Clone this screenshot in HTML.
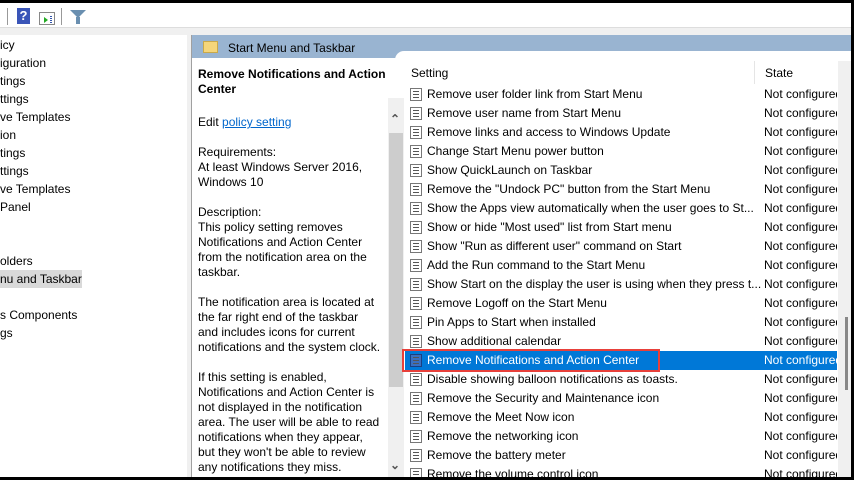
<!DOCTYPE html>
<html><head><style>
*{margin:0;padding:0;box-sizing:border-box}
html,body{width:854px;height:480px;overflow:hidden}
body{background:#000;position:relative;font-family:"Liberation Sans",sans-serif;font-size:12px;color:#000}
.a{position:absolute}
.tree div{position:absolute;left:0;height:18px;line-height:18px;font-size:12px}
.row{position:absolute;left:405px;width:432px;height:19px;line-height:19px;font-size:12px;white-space:nowrap;overflow:hidden}
.row .ic{position:absolute;left:5px;top:3px;width:12px;height:13px;border:1px solid #777;background:#fff}
.row .ic:before{content:"";position:absolute;left:2px;top:2px;width:6px;height:7px;background:repeating-linear-gradient(#555 0 1px,transparent 1px 3px)}
.row .t{position:absolute;left:22px}
.row .s{position:absolute;left:359px}
.desc{position:absolute;left:198px;top:66px;width:188px;height:408px;overflow:hidden;font-size:12px;line-height:15px;white-space:nowrap}
.desc>div{margin-top:15px}
</style></head><body>
<div class="a" style="left:0;top:3px;width:851px;height:24px;background:#fff"></div>
<div class="a" style="left:0;top:27px;width:851px;height:8px;background:#f0f0f0;border-top:1px solid #ddd"></div>
<div class="a" style="left:7px;top:8px;width:1px;height:17px;background:#999"></div>
<div class="a" style="left:17px;top:8px;width:13px;height:16px;background:#3a55b8;color:#fff;font-weight:bold;font-size:13px;text-align:center;line-height:16px">?</div>
<div class="a" style="left:39px;top:12px;width:16px;height:13px;border:1px solid #888;background:#fff"><div class="a" style="left:4px;top:4px;width:0;height:0;border-left:4px solid #2a2;border-top:3px solid transparent;border-bottom:3px solid transparent"></div><div class="a" style="left:10px;top:3px;width:2px;height:7px;background:repeating-linear-gradient(#35a 0 1px,transparent 1px 2px)"></div></div>
<div class="a" style="left:61px;top:8px;width:1px;height:17px;background:#999"></div>
<div class="a" style="left:70px;top:10px;width:0;height:0;border-left:8px solid transparent;border-right:8px solid transparent;border-top:8px solid #6a8fb0"></div>
<div class="a" style="left:76px;top:17px;width:4px;height:7px;background:#6a8fb0"></div>
<!-- left -->
<div class="a tree" style="left:0;top:35px;width:187px;height:442px;background:#fff">
<div style="top:1px">icy</div><div style="top:19px">iguration</div><div style="top:37px">tings</div><div style="top:55px">ttings</div><div style="top:73px">ve Templates</div><div style="top:91px">ion</div><div style="top:109px">tings</div><div style="top:127px">ttings</div><div style="top:145px">ve Templates</div><div style="top:163px">Panel</div><div style="top:217px">olders</div><div style="top:235px;background:#d9d9d9;width:82px">nu and Taskbar</div><div style="top:271px">s Components</div><div style="top:289px">gs</div>
</div>
<div class="a" style="left:187px;top:35px;width:4px;height:442px;background:#f0f0f0"></div>
<div class="a" style="left:191px;top:35px;width:1px;height:442px;background:#a0a0a0"></div>
<!-- header -->
<div class="a" style="left:192px;top:35px;width:659px;height:24px;background:#99b4d1"></div>
<div class="a" style="left:203px;top:41px;width:15px;height:12px;background:#f5d67a;border:1px solid #c9a94a"></div>
<div class="a" style="left:228px;top:41px;font-size:12px">Start Menu and Taskbar</div>
<div class="a" style="left:192px;top:58px;width:204px;height:419px;background:#fff"></div>
<div class="a" style="left:395px;top:51px;width:456px;height:426px;background:#fff;border-top-left-radius:9px"></div>
<div class="desc"><b style="display:block;margin-top:1px">Remove Notifications and Action<br>Center</b>
<div style="margin-top:18px">Edit <span style="color:#06c;text-decoration:underline">policy setting </span></div>
<div>Requirements:<br>At least Windows Server 2016,<br>Windows 10</div>
<div>Description:<br>This policy setting removes<br>Notifications and Action Center<br>from the notification area on the<br>taskbar.</div>
<div>The notification area is located at<br>the far right end of the taskbar<br>and includes icons for current<br>notifications and the system clock.</div>
<div>If this setting is enabled,<br>Notifications and Action Center is<br>not displayed in the notification<br>area. The user will be able to read<br>notifications when they appear,<br>but they won't be able to review<br>any notifications they miss.</div></div>
<div class="a" style="left:388px;top:98px;width:16px;height:379px;background:#f0f0f0"></div>
<div class="a" style="left:389px;top:133px;width:14px;height:254px;background:#cdcdcd"></div>
<div class="a" style="left:390px;top:112px;font-size:12px;font-weight:bold;color:#555">&#8963;</div>
<div class="a" style="left:390px;top:458px;font-size:12px;font-weight:bold;color:#555">&#8964;</div>
<!-- list -->
<div class="a" style="left:411px;top:66px">Setting</div>
<div class="a" style="left:754px;top:61px;width:1px;height:23px;background:#e5e5e5"></div>
<div class="a" style="left:765px;top:66px">State</div>
<div class="a" style="left:838px;top:61px;width:13px;height:416px;background:#f0f0f0"></div>
<div class="a" style="left:845px;top:317px;width:3px;height:73px;background:#888"></div>
<div class="row" style="top:85px"><i class="ic"></i><span class="t">Remove user folder link from Start Menu</span><span class="s">Not configured</span></div>
<div class="row" style="top:104px"><i class="ic"></i><span class="t">Remove user name from Start Menu</span><span class="s">Not configured</span></div>
<div class="row" style="top:123px"><i class="ic"></i><span class="t">Remove links and access to Windows Update</span><span class="s">Not configured</span></div>
<div class="row" style="top:142px"><i class="ic"></i><span class="t">Change Start Menu power button</span><span class="s">Not configured</span></div>
<div class="row" style="top:161px"><i class="ic"></i><span class="t">Show QuickLaunch on Taskbar</span><span class="s">Not configured</span></div>
<div class="row" style="top:180px"><i class="ic"></i><span class="t">Remove the "Undock PC" button from the Start Menu</span><span class="s">Not configured</span></div>
<div class="row" style="top:199px"><i class="ic"></i><span class="t">Show the Apps view automatically when the user goes to St...</span><span class="s">Not configured</span></div>
<div class="row" style="top:218px"><i class="ic"></i><span class="t">Show or hide "Most used" list from Start menu</span><span class="s">Not configured</span></div>
<div class="row" style="top:237px"><i class="ic"></i><span class="t">Show "Run as different user" command on Start</span><span class="s">Not configured</span></div>
<div class="row" style="top:256px"><i class="ic"></i><span class="t">Add the Run command to the Start Menu</span><span class="s">Not configured</span></div>
<div class="row" style="top:275px"><i class="ic"></i><span class="t">Show Start on the display the user is using when they press t...</span><span class="s">Not configured</span></div>
<div class="row" style="top:294px"><i class="ic"></i><span class="t">Remove Logoff on the Start Menu</span><span class="s">Not configured</span></div>
<div class="row" style="top:313px"><i class="ic"></i><span class="t">Pin Apps to Start when installed</span><span class="s">Not configured</span></div>
<div class="row" style="top:332px"><i class="ic"></i><span class="t">Show additional calendar</span><span class="s">Not configured</span></div>
<div class="row" style="top:351px;height:19px;background:#0078d7;color:#fff"><i class="ic" style="background:#3a6fc0;border-color:#1a3f80"></i><span class="t">Remove Notifications and Action Center</span><span class="s">Not configured</span></div>
<div class="a" style="left:402px;top:349px;width:258px;height:23px;border:2px solid #e8403a"></div>
<div class="row" style="top:370px"><i class="ic"></i><span class="t">Disable showing balloon notifications as toasts.</span><span class="s">Not configured</span></div>
<div class="row" style="top:389px"><i class="ic"></i><span class="t">Remove the Security and Maintenance icon</span><span class="s">Not configured</span></div>
<div class="row" style="top:408px"><i class="ic"></i><span class="t">Remove the Meet Now icon</span><span class="s">Not configured</span></div>
<div class="row" style="top:427px"><i class="ic"></i><span class="t">Remove the networking icon</span><span class="s">Not configured</span></div>
<div class="row" style="top:446px"><i class="ic"></i><span class="t">Remove the battery meter</span><span class="s">Not configured</span></div>
<div class="row" style="top:465px;height:12px"><i class="ic"></i><span class="t">Remove the volume control icon</span><span class="s">Not configured</span></div>
</body></html>
